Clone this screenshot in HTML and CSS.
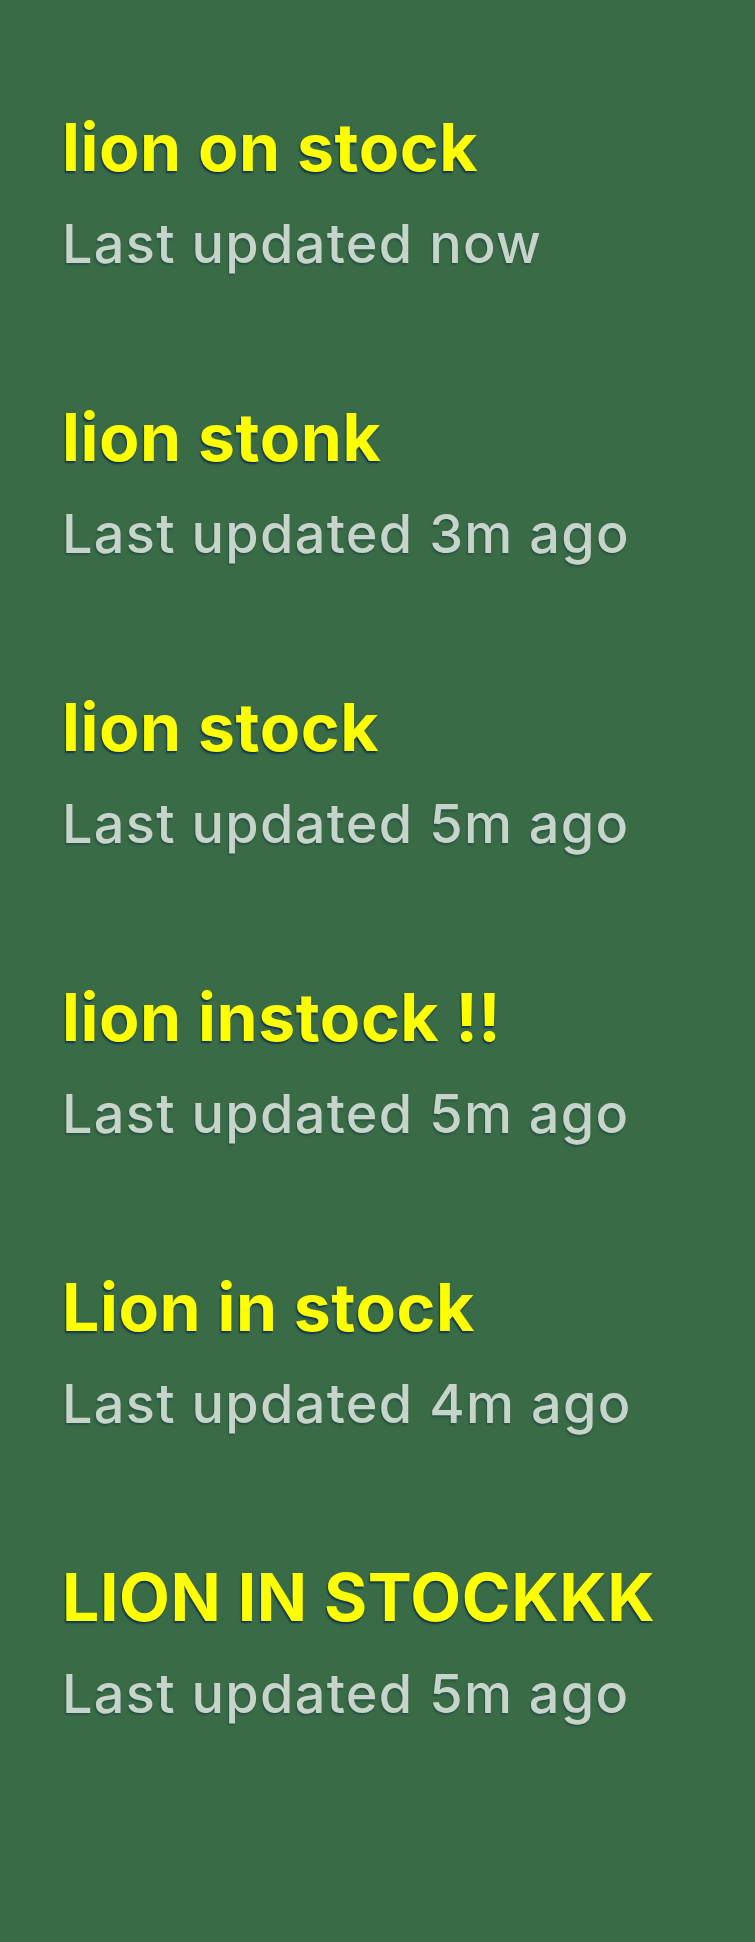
FILE: index.html
```html
<!DOCTYPE html>
<html>
<head>
<meta charset="utf-8">
<link rel="stylesheet" href="styles.css">
</head>
<body>
<main class="list">
  <div class="item"><div class="title">lion on stock</div><div class="meta">Last updated now</div></div>
  <div class="item"><div class="title">lion stonk</div><div class="meta">Last updated 3m ago</div></div>
  <div class="item"><div class="title">lion stock</div><div class="meta">Last updated 5m ago</div></div>
  <div class="item"><div class="title">lion instock !!</div><div class="meta">Last updated 5m ago</div></div>
  <div class="item"><div class="title">Lion in stock</div><div class="meta">Last updated 4m ago</div></div>
  <div class="item"><div class="title">LION IN STOCKKK</div><div class="meta">Last updated 5m ago</div></div>
</main>
</body>
</html>
```
FILE: styles.css
```css
html, body {
  margin: 0;
  padding: 0;
  background: #3a6b47;
}
body {
  font-family: Inter, "Noto Sans", sans-serif;
  min-height: 1942px;
}
.list {
  display: flex;
  flex-direction: column;
  gap: 121px;
  padding: 107px 0 0 62px;
}
.item {
  display: flex;
  flex-direction: column;
  gap: 25px;
}
.title {
  font-size: 66px;
  line-height: 80px;
  font-weight: 700;
  letter-spacing: 0.6px;
  color: #ffff00;
  text-shadow: -1px 2px 2px rgba(0, 40, 80, 0.8);
}
.meta {
  font-size: 54px;
  line-height: 64px;
  font-weight: 500;
  letter-spacing: 1.3px;
  color: #c6d4c9;
  text-shadow: -1px 2px 2px rgba(0, 40, 60, 0.35);
}
```
